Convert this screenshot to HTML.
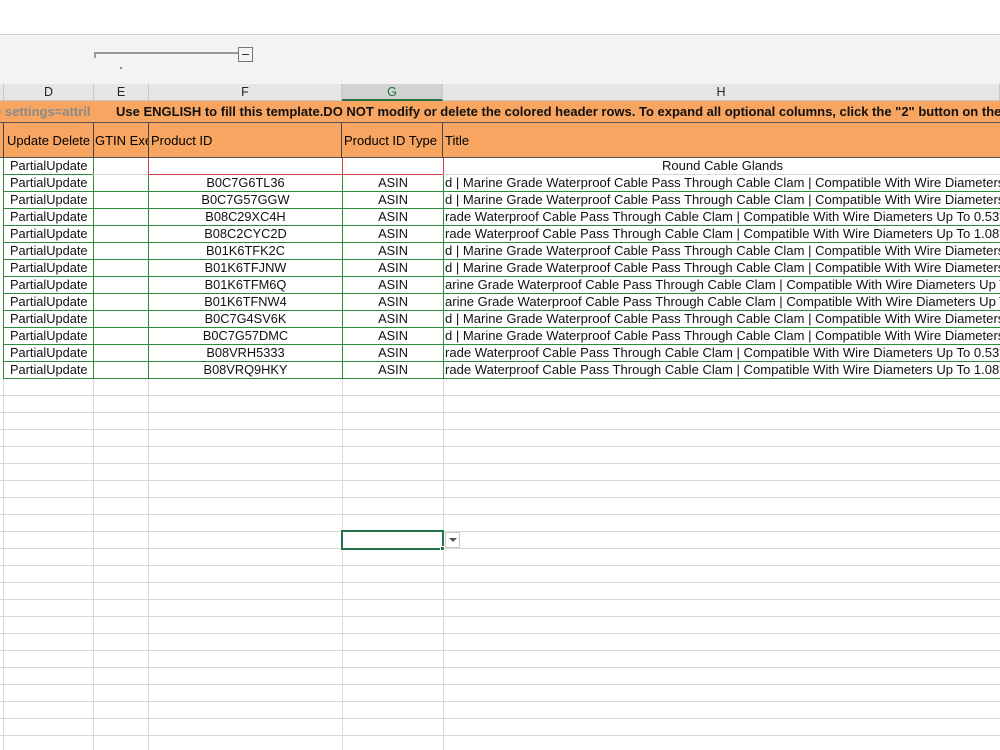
<!DOCTYPE html>
<html><head><style>
body{margin:0;width:1000px;height:750px;overflow:hidden;background:#fff;font-family:"Liberation Sans",Arial,sans-serif;position:relative}
.a{position:absolute;box-sizing:border-box;white-space:nowrap;overflow:hidden}
.top{left:0;width:1000px;background:#f3f3f3;border-top:1px solid #d0d0d0;top:34px;height:50px}
.grid{left:0;top:379px;width:1000px;height:371px;background:
repeating-linear-gradient(to bottom,transparent 0,transparent 16px,#d9d9d9 16px,#d9d9d9 17px);}
.vl{position:absolute;top:379px;height:371px;width:1px;background:#d9d9d9}
.ch{top:84px;height:17px;background:#e6e6e6;border-right:1px solid #c8c8c8;border-bottom:1px solid #c8c8c8;font-size:12.5px;text-align:center;line-height:17px;color:#222}
.r{font-size:12.8px;line-height:16px;height:17px;color:#111}
.h{font-size:13.05px}
</style></head><body>
<div class="a" style="left:0;top:0;width:1000px;height:34px;background:#fff"></div>
<div class="a top"></div>
<div class="a" style="left:94px;top:52px;width:144px;height:2px;background:#999"></div>
<div class="a" style="left:94px;top:52px;width:2px;height:6px;background:#999"></div>
<div class="a" style="left:238px;top:47px;width:15px;height:15px;border:1px solid #777;background:#f3f3f3"></div>
<div class="a" style="left:242px;top:54px;width:7px;height:1px;background:#333"></div>
<div class="a" style="left:120px;top:67px;width:2px;height:2px;background:#888"></div>
<div class="a ch" style="left:0;width:4px"></div>
<div class="a ch" style="left:4px;width:90px">D</div>
<div class="a ch" style="left:94px;width:55px">E</div>
<div class="a ch" style="left:149px;width:193px">F</div>
<div class="a ch" style="left:342px;width:101px;background:#d2d2d2;border-bottom:2px solid #217346;color:#217346">G</div>
<div class="a ch" style="left:443px;width:557px">H</div>
<div class="a" style="left:0;top:101px;width:1000px;height:22px;background:#f7a560;border-bottom:1px solid #555"></div>
<div class="a" style="left:0;top:101px;width:93px;height:22px;font-size:13px;line-height:22px;color:#8a8a8a;font-weight:bold;text-indent:-6px">e settings=attril</div>
<div class="a" style="left:116px;top:101px;width:884px;height:22px;font-size:13px;line-height:22px;font-weight:bold;color:#111">Use ENGLISH to fill this template.DO NOT modify or delete the colored header rows. To expand all optional columns, click the "2" button on the to</div>
<div class="a" style="left:0;top:123px;width:1000px;height:35px;background:#f7a560;border-bottom:1px solid #555"></div>
<div class="a" style="left:3px;top:123px;width:91px;height:35px;border-left:1px solid #444;border-right:1px solid #444;font-size:13px;line-height:35px;padding-left:3px">Update Delete</div>
<div class="a" style="left:94px;top:123px;width:55px;height:35px;border-right:1px solid #444;font-size:13px;line-height:35px;padding-left:1px">GTIN Exe</div>
<div class="a" style="left:149px;top:123px;width:193px;height:35px;border-right:1px solid #444;font-size:13px;line-height:35px;padding-left:2px">Product ID</div>
<div class="a" style="left:342px;top:123px;width:101px;height:35px;border-right:1px solid #444;font-size:13px;line-height:35px;padding-left:2px">Product ID Type</div>
<div class="a" style="left:443px;top:123px;width:557px;height:35px;font-size:13px;line-height:35px;padding-left:2px">Title</div>
<div class="a grid"></div>
<div class="vl" style="left:3px"></div><div class="vl" style="left:93px"></div><div class="vl" style="left:148px"></div><div class="vl" style="left:342px"></div><div class="vl" style="left:443px"></div>
<div id="rows"></div>
<script>
var ids=["","B0C7G6TL36","B0C7G57GGW","B08C29XC4H","B08C2CYC2D","B01K6TFK2C","B01K6TFJNW","B01K6TFM6Q","B01K6TFNW4","B0C7G4SV6K","B0C7G57DMC","B08VRH5333","B08VRQ9HKY"];
var a="d | Marine Grade Waterproof Cable Pass Through Cable Clam | Compatible With Wire Diameters Up To",
b="rade Waterproof Cable Pass Through Cable Clam | Compatible With Wire Diameters Up To 0.53\"",
c="rade Waterproof Cable Pass Through Cable Clam | Compatible With Wire Diameters Up To 1.08\"",
d="arine Grade Waterproof Cable Pass Through Cable Clam | Compatible With Wire Diameters Up To";
var t=["Round Cable Glands",a,a,b,c,a,a,d,d,a,a,b,c];
var h="";
for(var i=0;i<13;i++){var y=158+i*17;var g=i==0?"#d9d9d9":"#2e8b3a";
h+='<div class="a r" style="left:3px;top:'+y+'px;width:91px;border:1px solid #2e8b3a;border-top:none;padding-left:6px">PartialUpdate</div>';
h+='<div class="a r" style="left:93px;top:'+y+'px;width:56px;border-right:1px solid #2e8b3a;border-bottom:1px solid '+g+'"></div>';
var fb=i==0?"1px solid #d04040":"1px solid #2e8b3a";
h+='<div class="a r" style="left:148px;top:'+y+'px;width:195px;border:'+fb+';border-top:none;text-align:center">'+ids[i]+'</div>';
h+='<div class="a r" style="left:342px;top:'+y+'px;width:102px;border:'+fb+';border-top:none;text-align:center">'+(i?"ASIN":"")+'</div>';
h+='<div class="a r h" style="left:443px;top:'+y+'px;width:557px;border-bottom:1px solid '+g+';padding-left:2px;'+(i==0?'text-align:center;':'')+'">'+t[i]+'</div>';}
document.getElementById("rows").innerHTML=h;
</script>
<div class="a" style="left:341px;top:530px;width:103px;height:20px;border:2px solid #217346"></div>
<div class="a" style="left:440px;top:546px;width:5px;height:5px;background:#217346;border:1px solid #fff"></div>
<div class="a" style="left:445px;top:532px;width:15px;height:16px;border:1px solid #c8c8c8;background:#fff"></div>
<div class="a" style="left:449px;top:538px;width:0;height:0;border-left:4px solid transparent;border-right:4px solid transparent;border-top:4px solid #555"></div>
</body></html>
